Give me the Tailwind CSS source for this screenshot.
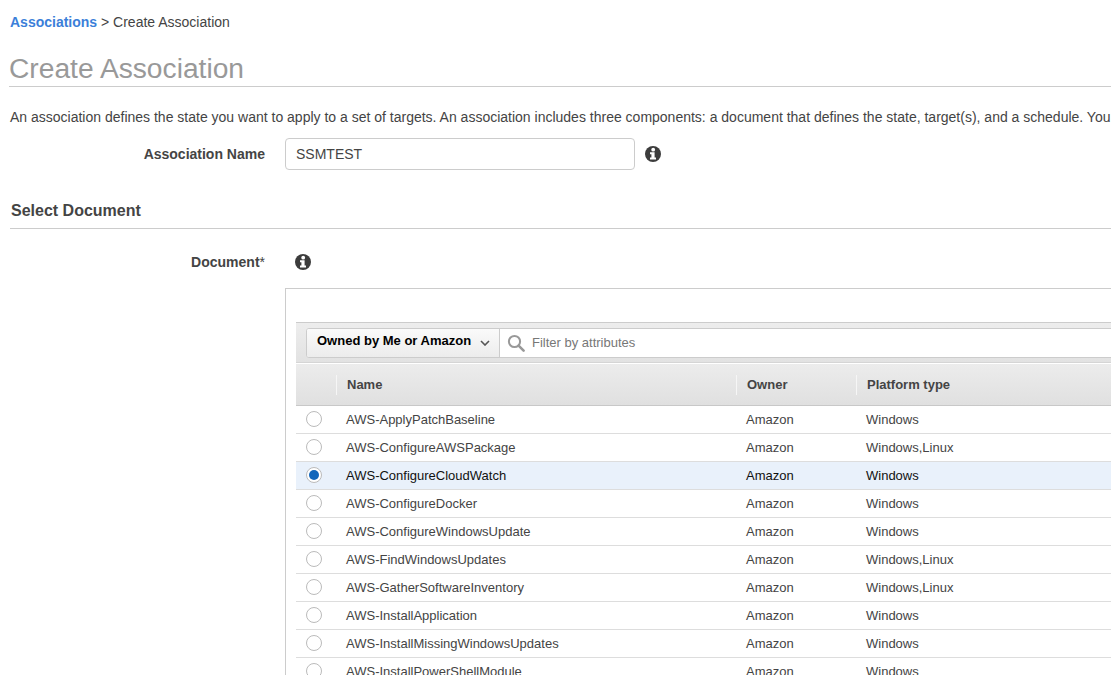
<!DOCTYPE html>
<html>
<head>
<meta charset="utf-8">
<script src="https://cdn.jsdelivr.net/npm/@tailwindcss/browser@4"></script>
</head>
<body class="bg-white">
<div class="w-[1111px] h-[675px] overflow-hidden font-['Liberation_Sans',Arial,sans-serif] text-[14px] text-[#444]">
  <div class="pl-[10px] pt-[14px] h-[50px] leading-[16px] whitespace-nowrap"><a class="font-bold text-[#3b7fd9]">Associations</a> &gt; Create Association</div>
  <div class="ml-[9px] h-[37px] border-b border-[#ccc] text-[28.2px] leading-[36px] text-[#999] whitespace-nowrap">Create Association</div>
  <p class="pl-[10px] mt-[22px] h-[16px] leading-[16px] whitespace-nowrap">An association defines the state you want to apply to a set of targets. An association includes three components: a document that defines the state, target(s), and a schedule. You</p>
  <div class="flex items-center mt-[13px] h-[32px]">
    <label class="w-[265px] text-right font-bold">Association Name</label>
    <div class="ml-[20px] w-[350px] h-[32px] border border-[#ccc] rounded-[4px] pl-[10px] leading-[30px] text-[#444]">SSMTEST</div>
    <svg class="ml-[10px]" width="16" height="16" viewBox="0 0 16 16"><circle cx="8" cy="8" r="8" fill="#3c3c3c"/><circle cx="8.2" cy="3.7" r="1.9" fill="#fff"/><path d="M5 6.2h4.6v5.4h1.4v2H5v-2h1.4V8.2H5z" fill="#fff"/></svg>
  </div>
  <div class="mt-[31px] ml-[10px] h-[28px] border-b border-[#ccc] pl-[1px] pt-[1px] text-[16px] leading-[18px] font-bold whitespace-nowrap">Select Document</div>
  <div class="flex items-center mt-[25px] h-[16px]">
    <label class="w-[265px] text-right font-bold">Document<span class="font-normal">*</span></label>
    <svg class="ml-[30px]" width="16" height="16" viewBox="0 0 16 16"><circle cx="8" cy="8" r="8" fill="#3c3c3c"/><circle cx="8.2" cy="3.7" r="1.9" fill="#fff"/><path d="M5 6.2h4.6v5.4h1.4v2H5v-2h1.4V8.2H5z" fill="#fff"/></svg>
  </div>
  <div class="ml-[285px] mt-[18px] w-[1000px] h-[500px] border border-[#ccc] pl-[10px] pt-[33px] text-[13px]">
    <div class="w-[980px]">
      <div class="h-[41px] border-t border-[#ccc] border-b-[1px] border-b-[#d5d5d5] bg-gradient-to-b from-[#ededed] to-[#e2e2e2] pl-[10px] pt-[5px]">
        <div class="flex h-[30px] w-[900px] bg-white border border-[#ccc] rounded-[3px] overflow-hidden">
          <div class="w-[193px] shrink-0 flex items-center pl-[10px] bg-gradient-to-b from-[#fafafa] to-[#ececec] border-r border-[#ccc] font-bold text-black whitespace-nowrap">
            <span class="-mt-[5px]">Owned by Me or Amazon</span>
            <svg class="ml-[9px]" width="10" height="6" viewBox="0 0 10 6"><path d="M1 1l4 4 4-4" fill="none" stroke="#555" stroke-width="1.6"/></svg>
          </div>
          <div class="flex items-center pl-[7px]">
            <svg width="18" height="18" viewBox="0 0 18 18"><circle cx="7.5" cy="7.5" r="5.6" fill="none" stroke="#999" stroke-width="2"/><path d="M11.6 11.6l5 5" stroke="#999" stroke-width="2.6" stroke-linecap="round"/></svg>
            <span class="ml-[7px] text-[#777] whitespace-nowrap">Filter by attributes</span>
          </div>
        </div>
      </div>
      <div class="h-[43px] flex items-center border-b border-[#c8c8c8] bg-gradient-to-b from-[#ececec] to-[#e0e0e0] font-bold text-[#444] border-t border-t-[#fff]">
        <div class="w-[40px] h-[20px]"></div>
        <div class="w-[400px] h-[20px] border-l border-[#f6f6f6] pl-[10px] leading-[20px]">Name</div>
        <div class="w-[120px] h-[20px] border-l border-[#f6f6f6] pl-[10px] leading-[20px]">Owner</div>
        <div class="w-[300px] h-[20px] border-l border-[#f6f6f6] pl-[10px] leading-[20px]">Platform type</div>
      </div>
      <div class="flex items-center h-[28px] border-b border-[#ddd]"><span class="ml-[10px] -mt-[1px] w-[16px] h-[16px] rounded-full border border-[#bbb] bg-white"></span><span class="ml-[24px] w-[400px]">AWS-ApplyPatchBaseline</span><span class="w-[120px]">Amazon</span><span>Windows</span></div>
      <div class="flex items-center h-[28px] border-b border-[#ddd]"><span class="ml-[10px] -mt-[1px] w-[16px] h-[16px] rounded-full border border-[#bbb] bg-white"></span><span class="ml-[24px] w-[400px]">AWS-ConfigureAWSPackage</span><span class="w-[120px]">Amazon</span><span>Windows,Linux</span></div>
      <div class="flex items-center h-[28px] border-b border-[#ddd] bg-[#e9f1fb] text-[#111]"><span class="ml-[10px] -mt-[1px] w-[16px] h-[16px] rounded-full border border-[#bbb] bg-white flex items-center justify-center"><span class="w-[10px] h-[10px] rounded-full bg-[#1166bb]"></span></span><span class="ml-[24px] w-[400px]">AWS-ConfigureCloudWatch</span><span class="w-[120px]">Amazon</span><span>Windows</span></div>
      <div class="flex items-center h-[28px] border-b border-[#ddd]"><span class="ml-[10px] -mt-[1px] w-[16px] h-[16px] rounded-full border border-[#bbb] bg-white"></span><span class="ml-[24px] w-[400px]">AWS-ConfigureDocker</span><span class="w-[120px]">Amazon</span><span>Windows</span></div>
      <div class="flex items-center h-[28px] border-b border-[#ddd]"><span class="ml-[10px] -mt-[1px] w-[16px] h-[16px] rounded-full border border-[#bbb] bg-white"></span><span class="ml-[24px] w-[400px]">AWS-ConfigureWindowsUpdate</span><span class="w-[120px]">Amazon</span><span>Windows</span></div>
      <div class="flex items-center h-[28px] border-b border-[#ddd]"><span class="ml-[10px] -mt-[1px] w-[16px] h-[16px] rounded-full border border-[#bbb] bg-white"></span><span class="ml-[24px] w-[400px]">AWS-FindWindowsUpdates</span><span class="w-[120px]">Amazon</span><span>Windows,Linux</span></div>
      <div class="flex items-center h-[28px] border-b border-[#ddd]"><span class="ml-[10px] -mt-[1px] w-[16px] h-[16px] rounded-full border border-[#bbb] bg-white"></span><span class="ml-[24px] w-[400px]">AWS-GatherSoftwareInventory</span><span class="w-[120px]">Amazon</span><span>Windows,Linux</span></div>
      <div class="flex items-center h-[28px] border-b border-[#ddd]"><span class="ml-[10px] -mt-[1px] w-[16px] h-[16px] rounded-full border border-[#bbb] bg-white"></span><span class="ml-[24px] w-[400px]">AWS-InstallApplication</span><span class="w-[120px]">Amazon</span><span>Windows</span></div>
      <div class="flex items-center h-[28px] border-b border-[#ddd]"><span class="ml-[10px] -mt-[1px] w-[16px] h-[16px] rounded-full border border-[#bbb] bg-white"></span><span class="ml-[24px] w-[400px]">AWS-InstallMissingWindowsUpdates</span><span class="w-[120px]">Amazon</span><span>Windows</span></div>
      <div class="flex items-center h-[28px] border-b border-[#ddd]"><span class="ml-[10px] -mt-[1px] w-[16px] h-[16px] rounded-full border border-[#bbb] bg-white"></span><span class="ml-[24px] w-[400px]">AWS-InstallPowerShellModule</span><span class="w-[120px]">Amazon</span><span>Windows</span></div>
    </div>
  </div>
</div>
</body>
</html>
